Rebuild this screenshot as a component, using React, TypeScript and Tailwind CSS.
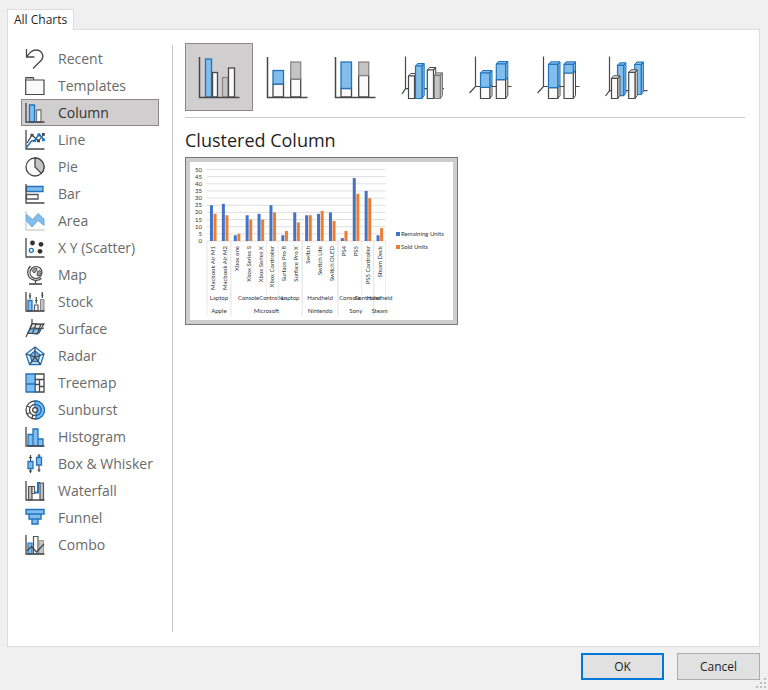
import { useState } from "react";
import type { ReactNode } from "react";

const DARK = "#484848";
const BLUE = "#1f74bd";
const SKY = "#82bdec";
const GRAY = "#c4c4c4";

/* SIDEBAR ICONS, 20 x 20 */

const icons: Record<string, ReactNode> = {
  Recent: (
    <path d="M1.5 0v8h8M1.5 8C5 3.500 7 1 11 1c6 0 8.500 6 5.500 10L8 19.500" stroke={DARK} strokeWidth="1.3" />
  ),
  Templates: (
    <g stroke={DARK}>
      <path d="M.7 4h18.3v14.5H.7z" fill="#fafafa" strokeWidth="1.2" />
      <path d="M.7 4V1.5h8V4" fill="#aaa" />
    </g>
  ),
  Column: (
    <g>
      <path d="M4.5 2h5v17h-5z" fill={SKY} stroke={BLUE} strokeWidth="1.3" />
      <path d="M11.5 7H16v12h-4.5z" fill="#fff" stroke="#777" strokeWidth="1.3" />
      <path d="M1 0v19h18.5" stroke={DARK} strokeWidth="1.3" />
    </g>
  ),
  Line: (
    <g>
      <path d="M1 0v19h18.5" stroke={DARK} strokeWidth="1.3" />
      <path d="M2 13l5-8 6.500 6 5.500-7" stroke={DARK} strokeWidth="1.2" />
      <path d="M1.5 17.5l5-6.500 3.500-.5L14 4l5 6" stroke={BLUE} strokeWidth="1.5" />
      <path d="M5.500 3.700h3v2.800h-3zM12 9.500h3v2.800h-3zM17 3h2.800v2.800H17z" fill={DARK} />
      <path d="M12.500 3.700h3v2.800h-3zM17 8.500h2.800v2.800H17zM8.500 9.500H11v2.500H8.500z" fill={BLUE} />
    </g>
  ),
  Pie: (
    <g stroke={DARK} strokeWidth="1.3">
      <circle cx="10" cy="10" r="9" fill="#fafafa" />
      <path d="M10 10V1a9 9 0 0 1 6.3 15.4z" fill={GRAY} />
    </g>
  ),
  Bar: (
    <g>
      <path d="M1.5 2.5H18v5H1.500z" fill={SKY} stroke={BLUE} strokeWidth="1.3" />
      <path d="M1.5 10.5H13V15H1.500z" fill="#fff" stroke="#555" strokeWidth="1.3" />
      <path d="M1 0v19h18.5" stroke={DARK} strokeWidth="1.3" />
    </g>
  ),
  Area: (
    <g>
      <path d="M1 0v19h18.5" stroke="#bbb" />
      <path d="M1.500 3.500l6 5 5.500-6L19 8v6.500l-6-5L7 16l-5.500-6z" fill={SKY} stroke="#5a9fd8" strokeWidth=".8" />
    </g>
  ),
  "X Y (Scatter)": (
    <g>
      <path d="M1 0v19h18.5" stroke={DARK} strokeWidth="1.3" />
      <g fill="#333">
        <circle cx="7.5" cy="5" r="2.4" />
        <circle cx="16" cy="6.3" r="2.4" />
        <circle cx="15" cy="13.3" r="2.4" />
      </g>
      <circle cx="6.3" cy="12.3" r="2" fill="#fff" stroke={BLUE} strokeWidth="1.3" />
    </g>
  ),
  Map: (
    <g stroke={DARK} strokeWidth="1.1">
      <circle cx="11" cy="7.5" r="6" fill="#fafafa" />
      <path d="M7 5.500l2.500-2.500 2.500.5-.5 2.500L9 8zM12.500 6.500l2.500-1 1.500 2-2 3.500-2.500-.5z" fill="#999" strokeWidth=".9" />
      <path d="M5.500 1C1.500 5 2 11.500 6.500 14c3.500 2 7.500 1.500 10-.8M10.500 15.500v3" strokeWidth="1.3" />
      <path d="M4 19h13" strokeWidth="1.6" />
    </g>
  ),
  Stock: (
    <g>
      <path d="M3 8.500h4V19H3z" fill={SKY} stroke={BLUE} strokeWidth="1.3" />
      <path d="M9.500 13h3.500v6H9.500z" fill="#fff" stroke="#555" strokeWidth="1.2" />
      <path d="M15.500 7.500H19V19h-3.500z" fill={GRAY} stroke="#888" />
      <path d="M1 0v19h18.5" stroke={DARK} strokeWidth="1.3" />
      <path d="M5 1v6M11.3 5v6.500M17.3 0v6" stroke={DARK} strokeWidth="1.2" />
      <path d="M3.500 3.500L5 5.500l1.500-2zM9.800 8l1.500 2 1.500-2zM15.800 2.500l1.500 2 1.500-2z" fill={DARK} />
    </g>
  ),
  Surface: (
    <g stroke={DARK} strokeWidth="1.2">
      <path d="M7 4.500l11.500 1L14 14H3.500z" fill="#e4e4e4" />
      <path d="M5 10l10 0-2.500 5L3 14z" fill={SKY} stroke={BLUE} />
      <path d="M7 0v5L1 18M5 9.500c5-2 9 2 14-.5M7 4.500c4 0 7 2 12.500 0M7.500 14L11 5M12.500 14.500L16 5M3 14.500h10" />
    </g>
  ),
  Radar: (
    <g strokeWidth="1.3">
      <path d="M10 1l9 7-3.500 10.5h-11L1 8z" fill="#eaf4fc" stroke={BLUE} />
      <path d="M10 5l5 4-2 6.500H7L5 9z" fill={SKY} stroke={BLUE} />
      <path d="M10 1v10M1 8l9 3 9-3M4.5 18.500L10 11l5.500 7.500" stroke={DARK} />
    </g>
  ),
  Treemap: (
    <g strokeWidth="1.3">
      <path d="M10 1h9v18h-9z" fill="#fff" stroke={DARK} />
      <path d="M1 1h9v18H1zM1 11h9" fill={SKY} stroke={BLUE} />
      <path d="M10 6.5h9M14.5 6.5V19M10 11.5h4.500M14.5 13.500H19" stroke={DARK} />
    </g>
  ),
  Sunburst: (
    <g strokeWidth="1.3">
      <circle cx="10" cy="10" r="9" fill="#fff" stroke={DARK} />
      <circle cx="10" cy="10" r="5.5" stroke={DARK} />
      <path d="M10 1a9 9 0 0 1 1 18v-3.500a5.500 5.500 0 0 0-1-11z" fill={SKY} stroke={BLUE} />
      <path d="M10 4.5a5.500 5.500 0 0 1 1 11V12.500a2.500 2.500 0 0 0-1-5z" fill={SKY} stroke={BLUE} />
      <circle cx="10" cy="10" r="2.3" fill="#fff" stroke={DARK} />
      <path d="M2 14l3.500-1.500M2 6l3.500 1.500M7 18l1-3" stroke={DARK} />
    </g>
  ),
  Histogram: (
    <g>
      <path d="M3 7.5h5V19H3zM8 2h5v17H8zM13 12h5v7h-5z" fill={SKY} stroke={BLUE} strokeWidth="1.3" />
      <path d="M1 0v19h18.5" stroke={DARK} strokeWidth="1.3" />
    </g>
  ),
  "Box & Whisker": (
    <g>
      <path d="M5.500 1v18M14 0v18M4 3.500h3M4 17h3M12.500 2h3M12.500 16h3" stroke={DARK} strokeWidth="1.2" />
      <path d="M3 7.500h5v7H3zM11.500 3.500h5V11h-5z" fill={SKY} stroke={BLUE} strokeWidth="1.3" />
    </g>
  ),
  Waterfall: (
    <g>
      <path d="M3.500 5.500h3.500V19H3.500zM15 2h3.500v17H15z" fill={GRAY} stroke="#555" strokeWidth="1.2" />
      <path d="M7 5.500h2.500v7H7z" fill="#fff" stroke="#555" strokeWidth="1.2" />
      <path d="M9.500 11.500H13V2h2" stroke={BLUE} strokeWidth="2" />
      <path d="M1 0v19h18.5" stroke={DARK} strokeWidth="1.3" />
    </g>
  ),
  Funnel: (
    <path d="M1 1.500h18V6H1zM4 6h12v5H4zM7 11h6v5H7z" fill={SKY} stroke={BLUE} strokeWidth="1.4" />
  ),
  Combo: (
    <g>
      <path d="M3 8h4v11H3z" fill={SKY} stroke={BLUE} strokeWidth="1.2" />
      <path d="M8.500 1.500H13V19H8.500z" fill="#fff" stroke="#555" strokeWidth="1.2" />
      <path d="M14 5.500h4.500V19H14z" fill={GRAY} stroke="#999" />
      <path d="M1 0v19h18.5M2 16l4.500-4.500 5 5.500L19 9" stroke={DARK} strokeWidth="1.3" />
    </g>
  ),
};

/* COLUMN SUBTYPES, 68 x 68 */

type RectProps = { x: number; y: number; w: number; bottom?: number; fill?: string; line?: string };

function Flat({ x, y, w, bottom = 54, fill = "#fafafa", line = DARK }: RectProps) {
  return <rect x={x} y={y} width={w} height={bottom - y} fill={fill} stroke={line} strokeWidth="1.3" />;
}

function Solid({ x, y, w, bottom = 55.5, fill = "#fafafa", line = DARK }: RectProps) {
  const right = x + w;
  return (
    <g fill={fill} stroke={line} strokeLinejoin="round">
      <path d={`M${x} ${y}l2.2-2.5H${right + 2.2}V${bottom - 3}L${right} ${bottom}V${y}z`} />
      <path d={`M${x} ${y}H${right}V${bottom}H${x}zM${right} ${y}l2.2-2.5`} strokeWidth="1.2" />
    </g>
  );
}

const blue = { fill: SKY, line: BLUE };
const gray = { fill: GRAY, line: "#888" };
const axis = <path d="M14.5 14v40.5h40" stroke={DARK} strokeWidth="1.5" />;
const axis3d = <path d="M18.5 13.5v30l-6 6.5M18.5 43.5h36" stroke={DARK} strokeWidth="1.2" />;

const subtypes: { name: string; art: ReactNode }[] = [
  {
    name: "Clustered Column",
    art: (
      <>
        <Flat x={20.5} y={16} w={6} {...blue} />
        <Flat x={27.5} y={29.5} w={5} />
        <Flat x={37.5} y={34.5} w={5.5} {...gray} />
        <Flat x={43.5} y={25} w={6} />
        {axis}
      </>
    ),
  },
  {
    name: "Stacked Column",
    art: (
      <>
        <Flat x={20} y={41} w={10.5} />
        <Flat x={20} y={27.5} w={10.5} bottom={41} {...blue} />
        <Flat x={37.7} y={36} w={10} />
        <Flat x={37.7} y={19} w={10} bottom={36} {...gray} />
        {axis}
      </>
    ),
  },
  {
    name: "100% Stacked Column",
    art: (
      <>
        <Flat x={20} y={45.5} w={10.5} />
        <Flat x={20} y={19} w={10.5} bottom={45.5} {...blue} />
        <Flat x={37.7} y={32.5} w={10} />
        <Flat x={37.7} y={19} w={10} bottom={32.5} {...gray} />
        {axis}
      </>
    ),
  },
  {
    name: "3-D Clustered Column",
    art: (
      <>
        <path d="M16.5 13.5v32.200L13 51M16.5 45.700H55" stroke={DARK} strokeWidth="1.2" />
        <Solid x={19.5} y={33} w={6} />
        <Solid x={26.5} y={23} w={6.5} {...blue} />
        <Solid x={38.3} y={27} w={6.2} />
        <Solid x={45.3} y={32.3} w={6} fill={GRAY} line="#777" />
      </>
    ),
  },
  {
    name: "3-D Stacked Column",
    art: (
      <>
        {axis3d}
        <Solid x={23.5} y={44.3} w={9.3} />
        <Solid x={23.5} y={30} w={9.3} bottom={44.3} {...blue} />
        <Solid x={39.3} y={36.7} w={9.3} />
        <Solid x={39.3} y={21} w={9.3} bottom={36.7} {...blue} />
      </>
    ),
  },
  {
    name: "3-D 100% Stacked Column",
    art: (
      <>
        {axis3d}
        <Solid x={23.5} y={44.7} w={9.3} />
        <Solid x={23.5} y={21.3} w={9.3} bottom={44.7} {...blue} />
        <Solid x={39} y={30} w={9.3} />
        <Solid x={39} y={21.3} w={9.3} bottom={30} {...blue} />
      </>
    ),
  },
  {
    name: "3-D Column",
    art: (
      <>
        <path d="M16.5 13.5v34.2l-4 5.3M16.5 47.7h38" stroke={DARK} strokeWidth="1.2" />
        <Solid x={24.5} y={22.3} w={6.2} bottom={52.7} {...blue} />
        <Solid x={41.7} y={21.5} w={6.5} bottom={51.5} {...blue} />
        <Solid x={18.5} y={35.3} w={6.2} />
        <Solid x={35.7} y={29.3} w={6.3} />
      </>
    ),
  },
];

/* PREVIEW CHART */

const products: [string, number, number][] = [
  ["Macbook Air M1", 25, 19],
  ["Macbook Air M2", 26, 18],
  ["Xbox one", 4, 5],
  ["Xbox Series S", 18, 15],
  ["Xbox Series X", 19, 15],
  ["Xbox Controller", 25, 20],
  ["Surface Pro 8", 4, 7],
  ["Surface Pro X", 20, 13],
  ["Switch", 18, 18],
  ["Switch Lite", 19, 21],
  ["Switch OLED", 20, 14],
  ["PS4", 2, 7],
  ["PS5", 44, 33],
  ["PS5 Controller", 35, 30],
  ["Steam Deck", 4, 9],
];

// label, first product, one past the last product
const kinds: [string, number, number][] = [
  ["Laptop", 0, 2],
  ["Console", 2, 5],
  ["Controller", 5, 6],
  ["Laptop", 6, 8],
  ["Handheld", 8, 11],
  ["Console", 11, 13],
  ["Controller", 13, 14],
  ["Handheld", 14, 15],
];

const brands: [string, number, number][] = [
  ["Apple", 0, 2],
  ["Microsoft", 2, 8],
  ["Nintendo", 8, 11],
  ["Sony", 11, 14],
  ["Steam", 14, 15],
];

const LEFT = 17;
const BASE = 79;
const STEP = 11.9;
const UNIT = 1.43;

function PreviewChart() {
  const at = (i: number) => LEFT + i * STEP;

  return (
    <svg
      viewBox="0 0 263 158"
      className="block w-full bg-white font-['Lato',sans-serif] text-[6px]"
      fill="#333"
    >
      {[0, 5, 10, 15, 20, 25, 30, 35, 40, 45, 50].map((v) => (
        <g key={v}>
          <path d={`M${LEFT} ${BASE - v * UNIT}H${at(15)}`} stroke="#d5d7dc" strokeWidth=".8" />
          <text x="12" y={BASE + 2 - v * UNIT} textAnchor="end">{v}</text>
        </g>
      ))}

      {brands.map(([label, from, to]) => (
        <g key={label}>
          <path d={`M${at(from)} ${BASE}v75M${at(to)} ${BASE}v75`} stroke="#e6e6e6" strokeWidth=".7" />
          <text x={(at(from) + at(to)) / 2} y="151" textAnchor="middle">{label}</text>
        </g>
      ))}

      {kinds.map(([label, from, to], i) => (
        <g key={i}>
          <path d={`M${at(from)} ${BASE}v62`} stroke="#e6e6e6" strokeWidth=".7" />
          <text x={(at(from) + at(to)) / 2} y="138" textAnchor="middle">{label}</text>
        </g>
      ))}

      {products.map(([label, remaining, sold], i) => {
        const mid = at(i) + STEP / 2;
        return (
          <g key={label}>
            <rect x={mid - 3} y={BASE - remaining * UNIT} width="3" height={remaining * UNIT} fill="#4472c4" />
            <rect x={mid + 0.6} y={BASE - sold * UNIT} width="3" height={sold * UNIT} fill="#ed7d31" />
            <text transform={`translate(${mid + 2} 84) rotate(-90)`} textAnchor="end">{label}</text>
          </g>
        );
      })}

      <rect x="206" y="70" width="4" height="4" fill="#4472c4" />
      <text x="211" y="74">Remaining Units</text>
      <rect x="206" y="83" width="4" height="4" fill="#ed7d31" />
      <text x="211" y="87">Sold Units</text>
    </svg>
  );
}

export default function App() {
  const [category, setCategory] = useState("Column");
  const [subtype, setSubtype] = useState("Clustered Column");

  return (
    <main className="relative flex min-h-screen flex-col bg-[#f0f0f0] pt-[9px] pr-2 pl-[7px] font-['Open_Sans','Noto_Sans',sans-serif] text-[#1f1f1f]">

      {/* TAB */}

      <div role="tablist" className="z-10 -mb-px flex">
        <button
          role="tab"
          aria-selected="true"
          className="h-[21px] border border-b-0 border-[#dcdcdc] bg-white px-[6px] text-xs"
        >
          All Charts
        </button>
      </div>

      <div className="flex flex-1 border border-[#dcdcdc] bg-white pr-[14px] pb-[14px] pl-[13px]">

        {/* CATEGORIES */}

        <nav className="mt-[15px] w-[152px] shrink-0 border-r border-[#c8c8c8] pr-[13px]">
          {Object.keys(icons).map((name) => (
            <button
              key={name}
              onClick={() => setCategory(name)}
              className={
                category === name
                  ? "flex h-[27px] w-full items-center gap-[13px] border border-[#8a8a8a] bg-[#d0cece] px-[3px] text-sm whitespace-nowrap text-[#333]"
                  : "flex h-[27px] w-full items-center gap-[13px] border border-transparent px-[3px] text-sm whitespace-nowrap text-[#6a6a6a]"
              }
            >
              <svg viewBox="0 0 20 20" fill="none" className="size-5 shrink-0">
                {icons[name]}
              </svg>
              {name}
            </button>
          ))}
        </nav>

        {/* SUBTYPES */}

        <section className="min-w-0 flex-1 pt-[13px] pl-3">
          <div className="flex flex-wrap border-b border-[#c8c8c8] pb-[6px]">
            {subtypes.map(({ name, art }) => (
              <button
                key={name}
                aria-label={name}
                onClick={() => setSubtype(name)}
                className={
                  subtype === name
                    ? "size-[68px] bg-[#d0cece] outline -outline-offset-1 outline-[#8a8a8a]"
                    : "size-[68px]"
                }
              >
                <svg viewBox="0 0 68 68" fill="none" className="size-full">
                  {art}
                </svg>
              </button>
            ))}
          </div>

          <h1 className="mt-2 text-lg leading-7">{subtype}</h1>

          <div className="mt-[3px] w-[273px] border border-[#777] bg-[#cdcdcd] p-1">
            <PreviewChart />
          </div>
        </section>
      </div>

      {/* ACTIONS */}

      <footer className="flex justify-end gap-[13px] pt-[6px] pb-[10px] text-xs">
        <button className="h-[27px] w-[83px] border-2 border-[#0078d7] bg-[#e1e1e1]">OK</button>
        <button className="h-[27px] w-[83px] border border-[#adadad] bg-[#e1e1e1]">Cancel</button>
      </footer>

      <svg viewBox="0 0 12 12" fill="#bfbfbf" className="absolute right-0 bottom-0 size-3">
        <path d="M8 0h2v2H8zM4 4h2v2H4zM8 4h2v2H8zM0 8h2v2H0zM4 8h2v2H4zM8 8h2v2H8z" />
      </svg>
    </main>
  );
}
